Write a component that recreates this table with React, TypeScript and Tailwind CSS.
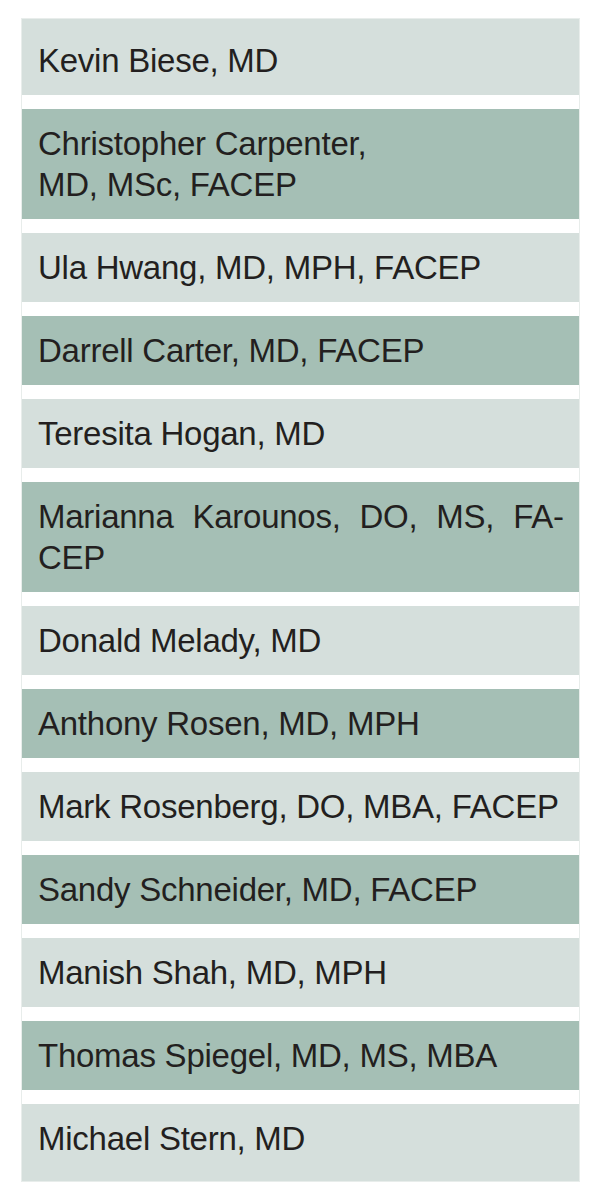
type Person = {
  name: React.ReactNode;
};

const people: Person[] = [
  { name: 'Kevin Biese, MD' },
  {
    name: (
      <>
        Christopher Carpenter,
        <br />
        MD, MSc, FACEP
      </>
    ),
  },
  { name: 'Ula Hwang, MD, MPH, FACEP' },
  { name: 'Darrell Carter, MD, FACEP' },
  { name: 'Teresita Hogan, MD' },
  { name: 'Marianna Karounos, DO, MS, FA\u00ADCEP' },
  { name: 'Donald Melady, MD' },
  { name: 'Anthony Rosen, MD, MPH' },
  { name: 'Mark Rosenberg, DO, MBA, FACEP' },
  { name: 'Sandy Schneider, MD, FACEP' },
  { name: 'Manish Shah, MD, MPH' },
  { name: 'Thomas Spiegel, MD, MS, MBA' },
  { name: 'Michael Stern, MD' },
];

const App = () => {
  return (
    <div className="min-h-[1200px] bg-white pt-[19px] font-['Liberation_Sans',Arial,sans-serif]">
      {/* Faculty list */}
      <div className="ml-[22px] flex w-[557px] flex-col gap-[14px] shadow-[0_0_0_1px_#e8edeb]">
        {people.map((p, i) => {
          const dark = i % 2 === 1;
          const first = i === 0;
          const last = i === people.length - 1;
          return (
            <div
              key={i}
              lang="en"
              className={`pl-[16px] pr-[15px] text-justify text-[33px] leading-[41px] tracking-[-0.25px] text-[#231f20] ${
                dark ? 'bg-[#a5bfb5]' : 'bg-[#d5dfdc]'
              } ${first ? 'pt-[21px]' : 'pt-[14px]'} ${last ? 'pb-[22px]' : 'pb-[14px]'}`}
            >
              {p.name}
            </div>
          );
        })}
      </div>
    </div>
  );
};

export default App;
